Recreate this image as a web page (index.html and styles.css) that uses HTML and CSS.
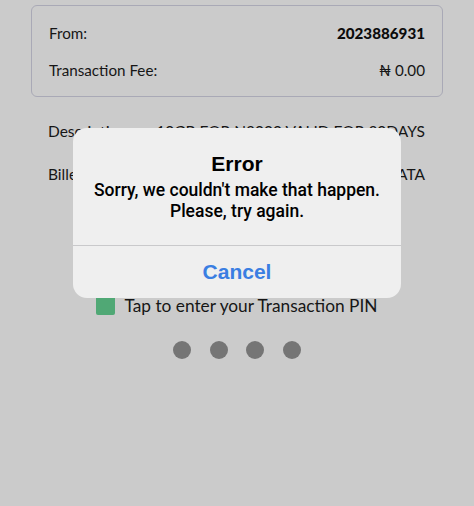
FILE: index.html
```html
<!DOCTYPE html>
<html>
<head>
<meta charset="utf-8">
<link rel="stylesheet" href="styles.css">
</head>
<body>
<div class="page">
  <div class="card">
    <div class="row"><span>From:</span><span class="strong">2023886931</span></div>
    <div class="row"><span>Transaction Fee:</span><span>₦ 0.00</span></div>
  </div>
  <div class="details">
    <div class="row"><span>Description:</span><span>10GB FOR N3000 VALID FOR 30DAYS</span></div>
    <div class="row"><span>Biller:</span><span>MTN DATA</span></div>
  </div>
  <div class="pin-hint"><span class="check"></span><span>Tap to enter your Transaction PIN</span></div>
  <div class="dots"><span class="dot"></span><span class="dot"></span><span class="dot"></span><span class="dot"></span></div>
</div>
<div class="alert">
  <div class="alert-body">
    <div class="alert-title">Error</div>
    <div class="alert-msg">Sorry, we couldn't make that happen.<br>Please, try again.</div>
  </div>
  <div class="alert-btn">Cancel</div>
</div>
</body>
</html>
```
FILE: styles.css
```css
html, body {
  margin: 0;
  padding: 0;
  background: #cbcbcb;
  height: 100%;
}
body {
  font-family: Lato, "Liberation Sans", sans-serif;
  color: #161616;
  overflow: hidden;
}
.page {
  padding-top: 5px;
}
.card {
  margin-left: 31px;
  width: 412px;
  box-sizing: border-box;
  border: 1px solid #a9a9b6;
  border-radius: 6px;
  padding: 8px 17px 8px 17px;
}
.row {
  display: flex;
  justify-content: space-between;
  align-items: center;
  font-size: 15.2px;
}
.card .row {
  height: 37px;
}
.strong {
  font-weight: 900;
  color: #0c0c0c;
}
.details {
  margin-top: 12px;
  padding: 0 49px 0 48px;
}
.details .row {
  height: 43px;
  font-size: 15.5px;
}
.pin-hint {
  margin-top: 98px;
  height: 24px;
  display: flex;
  align-items: center;
  justify-content: center;
  gap: 9px;
  font-size: 17.3px;
}
.check {
  width: 19px;
  height: 19px;
  border-radius: 2px;
  background: #50a875;
}
.dots {
  margin-top: 24px;
  display: flex;
  justify-content: center;
  gap: 18.5px;
}
.dot {
  width: 18px;
  height: 18px;
  border-radius: 50%;
  background: #757575;
}
.alert {
  position: absolute;
  left: 73px;
  top: 128px;
  width: 328px;
  border-radius: 14px;
  background: #efefef;
  font-family: "Liberation Sans", Arial, sans-serif;
  color: #000;
  text-align: center;
}
.alert-body {
  padding: 24px 8px 23px;
  border-bottom: 1px solid #c9c9cb;
}
.alert-title {
  font-size: 21px;
  font-weight: 700;
  line-height: 24px;
  margin-bottom: 4px;
}
.alert-msg {
  font-family: Roboto, "Liberation Sans", sans-serif;
  font-weight: 500;
  font-size: 17.5px;
  line-height: 21px;
}
.alert-btn {
  height: 52px;
  line-height: 52px;
  font-size: 21px;
  font-weight: 700;
  color: #3a7ee2;
}
```
